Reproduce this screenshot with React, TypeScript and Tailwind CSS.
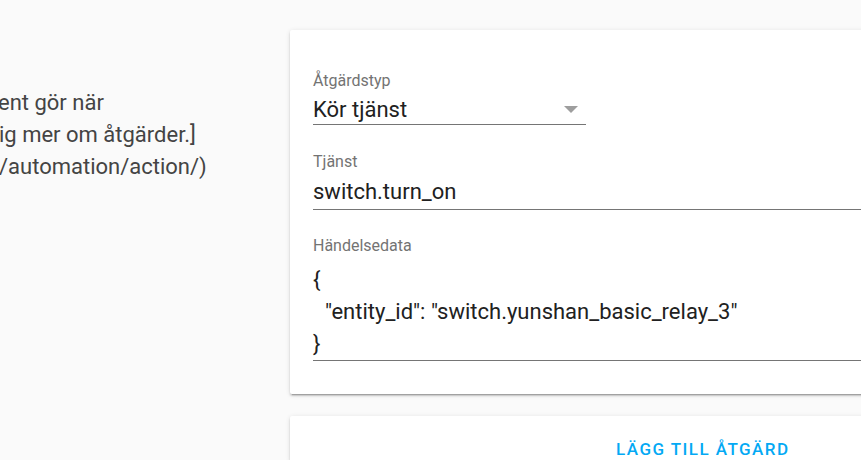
export default function App() {
  return (
    <div
      className="flex h-[460px] w-[861px] overflow-hidden bg-[#fafafa]"
      style={{ fontFamily: "Roboto, 'Noto Sans', sans-serif" }}
    >
      {/* Intro text, clipped at the left edge */}
      <div className="w-[290px] shrink-0 overflow-hidden pt-[87px] text-[22px] leading-[32px] text-[#444444]">
        <div className="-ml-[2px] whitespace-nowrap">ent gör när</div>
        <div className="-ml-[1px] whitespace-nowrap">ig mer om åtgärder.]</div>
        <div className="-ml-[1px] whitespace-nowrap">/automation/action/)</div>
      </div>

      <div className="flex flex-col gap-[22px] pt-[30px]">
        {/* Action card */}
        <div className="w-[620px] rounded-[2px] bg-white pb-[33px] pl-[23px] pt-[41px] shadow-[0_2px_2px_0_rgba(0,0,0,0.14),0_1px_5px_0_rgba(0,0,0,0.12),0_3px_1px_-2px_rgba(0,0,0,0.2)]">
          {/* Åtgärdstyp */}
          <div className="w-[273px]">
            <div className="text-[16px] leading-[20px] text-[#737373]">Åtgärdstyp</div>
            <div className="mt-[3px] flex h-[31px] items-center justify-between border-b border-[#757575]">
              <span className="text-[22px] leading-[31px] text-[#212121]">Kör tjänst</span>
              <svg width="16" height="8" viewBox="0 0 16 8" className="mr-[7px] mt-[1px]">
                <path d="M1 0h14L8 7z" fill="#9e9e9e" />
              </svg>
            </div>
          </div>

          {/* Tjänst */}
          <div className="mt-[27px]">
            <div className="text-[16px] leading-[20px] text-[#737373]">Tjänst</div>
            <div className="mt-[5px] h-[33px] border-b border-[#757575] text-[22px] leading-[30px] text-[#212121]">
              switch.turn_on
            </div>
          </div>

          {/* Händelsedata */}
          <div className="mt-[26px]">
            <div className="text-[16px] leading-[20px] text-[#737373]">Händelsedata</div>
            <div className="mt-[8px] border-b border-[#757575] text-[22px] leading-[32px] text-[#212121]">
              <div>{"{"}</div>
              <div className="pl-[12px]">"entity_id": "switch.yunshan_basic_relay_3"</div>
              <div>{"}"}</div>
            </div>
          </div>
        </div>

        {/* Add action card */}
        <div className="h-[80px] w-[620px] rounded-[2px] bg-white shadow-[0_2px_2px_0_rgba(0,0,0,0.14),0_1px_5px_0_rgba(0,0,0,0.12),0_3px_1px_-2px_rgba(0,0,0,0.2)]">
          <button className="ml-[326px] mt-[22px] text-[17px] font-medium leading-[22px] tracking-[1.45px] text-[#03a9f4]">
            LÄGG TILL ÅTGÄRD
          </button>
        </div>
      </div>
    </div>
  );
}
